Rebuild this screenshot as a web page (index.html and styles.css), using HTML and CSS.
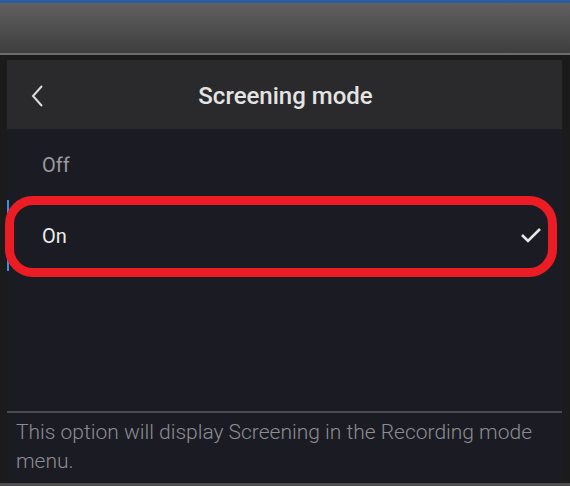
FILE: index.html
```html
<!DOCTYPE html>
<html lang="en">
<head>
  <meta charset="UTF-8">
  <title>Screening mode</title>
  <link rel="stylesheet" href="styles.css">
</head>
<body>
  <div class="topbar"></div>
  <div class="screen">
    <div class="header">
      <svg class="back" width="14" height="24" viewBox="0 0 14 24">
        <polyline points="12,2 3,12 12,22" fill="none" stroke="#dcdcdc" stroke-width="2"/>
      </svg>
      <h1>Screening mode</h1>
    </div>
    <div class="list">
      <div class="row off">Off</div>
      <div class="row selected">
        <span>On</span>
        <svg class="check" width="22" height="16" viewBox="0 0 22 16">
          <polyline points="2,8 8,14 20,2" fill="none" stroke="#e6e6e6" stroke-width="2.6"/>
        </svg>
        <div class="highlight"></div>
      </div>
    </div>
    <div class="footer">This option will display Screening in the Recording mode menu.</div>
  </div>
  <div class="bottombar"></div>
</body>
</html>
```

FILE: styles.css
```css
body {
  margin: 0;
  width: 570px;
  height: 486px;
  overflow: hidden;
  background: #1b1b1b;
  font-family: Roboto, "Liberation Sans", sans-serif;
}
.topbar {
  height: 50px;
  border-top: 3px solid #2d5c9e;
  border-bottom: 2px solid #6c6c6c;
  background: linear-gradient(#606060, #3e3e3e);
}
.screen {
  margin: 5px 8px 0 7px;
  height: 423px;
  display: flex;
  flex-direction: column;
  background: #1b1c23;
}
.header {
  position: relative;
  height: 69px;
  background: #2a2a2c;
  display: flex;
  align-items: center;
  justify-content: center;
}
.header h1 {
  margin: 3px 0 0 2px;
  font-size: 24px;
  font-weight: 500;
  color: #e4e4e4;
}
.back {
  position: absolute;
  left: 23px;
  top: 24px;
}
.list {
  height: 282px;
  border-bottom: 2px solid #4a4b52;
}
.row {
  position: relative;
  height: 71px;
  display: flex;
  align-items: center;
  justify-content: space-between;
  padding: 0 20px 0 35px;
  font-size: 20px;
  color: #ececec;
}
.row.off {
  color: #9a9a9e;
}
.row.selected {
  border-left: 2px solid #3a8fe0;
  padding-left: 33px;
}
.check {
  margin-top: -2px;
}
.highlight {
  position: absolute;
  top: -4px;
  bottom: -6px;
  left: -4px;
  right: 5px;
  border: 9px solid #ec1c24;
  border-radius: 28px;
}
.footer {
  padding: 5px 20px 0 9px;
  font-size: 21px;
  line-height: 29px;
  font-weight: 300;
  color: #8c8c91;
}
.bottombar {
  height: 3px;
  background: #4e4e4e;
}
```
